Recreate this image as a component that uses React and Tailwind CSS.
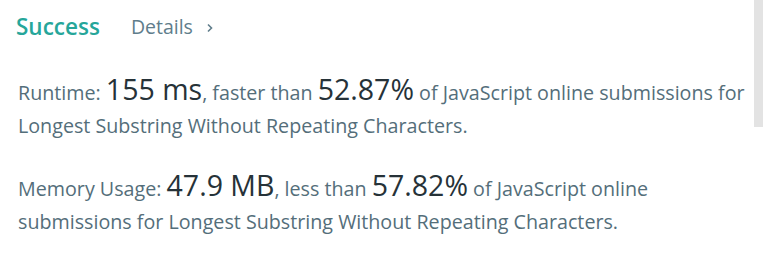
import React from 'react';

const font = { fontFamily: '"Open Sans", "Noto Sans", sans-serif' };

const Big = ({ children }) => (
  <span className="text-[28.5px] leading-none text-[#263238]">{children}</span>
);

export default function App() {
  return (
    <div className="relative w-[765px] h-[259px] bg-white overflow-hidden" style={font}>
      <div className="pl-[16px] pt-[12px] w-[752px]">
        <div className="flex items-center h-[30px]">
          <span className="text-[22.5px] font-semibold text-[#26a69a]">Success</span>
          <span className="ml-[31px] text-[19.5px] text-[#607d8b]">Details</span>
          <svg className="ml-[13px] mt-[2px]" width="8" height="10" viewBox="0 0 8 10" fill="none">
            <path d="M2 1.5 L5.5 5 L2 8.5" stroke="#607d8b" strokeWidth="1.6" />
          </svg>
        </div>
        <p className="mt-[33px] pl-[2px] text-[19.7px] leading-[33px] text-[#546e7a]">
          Runtime: <Big>155 ms</Big>, faster than <Big>52.87%</Big> of JavaScript online submissions for
          Longest Substring Without Repeating Characters.
        </p>
        <p className="mt-[29px] pl-[2px] pr-[100px] text-[19.7px] leading-[33px] text-[#546e7a]">
          Memory Usage: <Big>47.9 MB</Big>, less than <Big>57.82%</Big> of JavaScript online submissions for
          Longest Substring Without Repeating Characters.
        </p>
      </div>
      <div className="absolute right-[2px] top-0 w-[9px] h-[127px] bg-[#e3e3e3]" />
    </div>
  );
}
